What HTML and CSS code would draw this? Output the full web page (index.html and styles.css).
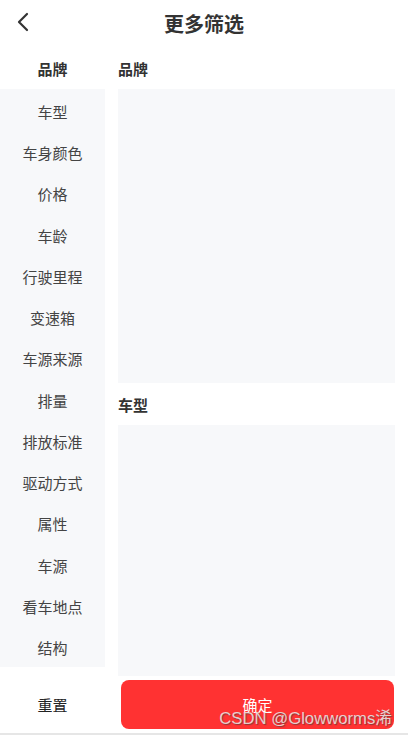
FILE: index.html
```html
<!DOCTYPE html>
<html lang="zh">
<head>
<meta charset="utf-8">
<link rel="stylesheet" href="styles.css">
</head>
<body>
<div class="page">
  <header class="header">
    <span class="back">
      <svg width="14" height="20" viewBox="0 0 14 20"><path d="M11 2 L3 10 L11 18" fill="none" stroke="#333" stroke-width="2.2" stroke-linecap="round" stroke-linejoin="round"/></svg>
    </span>
    <h1 class="title">更多筛选</h1>
  </header>
  <main class="main">
    <nav class="sidebar">
      <div class="item active">品牌</div>
      <div class="item">车型</div>
      <div class="item">车身颜色</div>
      <div class="item">价格</div>
      <div class="item">车龄</div>
      <div class="item">行驶里程</div>
      <div class="item">变速箱</div>
      <div class="item">车源来源</div>
      <div class="item">排量</div>
      <div class="item">排放标准</div>
      <div class="item">驱动方式</div>
      <div class="item">属性</div>
      <div class="item">车源</div>
      <div class="item">看车地点</div>
      <div class="item">结构</div>
    </nav>
    <section class="content">
      <div class="sec-title">品牌</div>
      <div class="box box-brand"></div>
      <div class="sec-title sec-title-2">车型</div>
      <div class="box box-model"></div>
    </section>
  </main>
  <footer class="footer">
    <div class="reset">重置</div>
    <button class="confirm">确定</button>
    <span class="watermark">CSDN @Glowworms浠</span>
  </footer>
</div>
</body>
</html>
```

FILE: styles.css
```css
* { box-sizing: border-box; }
html, body { margin: 0; padding: 0; background: #fff; }
body {
  font-family: "Noto Sans CJK SC", "Noto Sans", sans-serif;
  color: #333;
}
.page {
  width: 408px;
  height: 735px;
  display: flex;
  flex-direction: column;
  overflow: hidden;
  border-bottom: 2px solid #e6e6e6;
}
.header {
  height: 48px;
  flex: none;
  position: relative;
  display: flex;
  align-items: center;
  justify-content: center;
}
.back {
  position: absolute;
  left: 16px;
  top: 12px;
  display: flex;
}
.title {
  margin: 0;
  font-size: 20px;
  font-weight: 700;
  color: #333;
  line-height: 48px;
}
.main {
  flex: none;
  height: 628px;
  display: flex;
  overflow: hidden;
}
.sidebar {
  width: 105px;
  flex: none;
  align-self: flex-start;
  background: #f7f8fa;
}
.item {
  height: 41.25px;
  padding-top: 3px;
  display: flex;
  align-items: center;
  justify-content: center;
  font-size: 15px;
  color: #444;
}
.item.active {
  padding-top: 0;
  background: #fff;
  font-weight: 700;
  color: #333;
}
.content {
  flex: 1;
  padding: 0 13px;
  overflow: hidden;
}
.sec-title {
  height: 41px;
  display: flex;
  align-items: center;
  font-size: 15px;
  font-weight: 700;
  color: #333;
}
.sec-title-2 { height: 42px; }
.box {
  background: #f7f8fa;
}
.box-brand { height: 294px; }
.box-model { height: 300px; }
.footer {
  flex: 1;
  display: flex;
  align-items: flex-start;
  position: relative;
}
.reset {
  width: 105px;
  height: 57px;
  display: flex;
  align-items: center;
  justify-content: center;
  font-size: 15px;
  color: #222;
}
.confirm {
  margin: 4px 14px 0 16px;
  flex: 1;
  height: 49px;
  border: none;
  border-radius: 8px;
  background: #ff3232;
  color: #fff;
  font-family: "Noto Sans CJK SC", sans-serif;
  font-size: 15px;
}
.watermark {
  position: absolute;
  right: 16px;
  top: 29px;
  font-family: "Liberation Sans", "Noto Sans CJK SC", sans-serif;
  font-size: 16.7px;
  color: rgba(235, 235, 235, 0.85);
  text-shadow: 1px 1px 1px rgba(60, 60, 60, 0.6);
  pointer-events: none;
}
```
